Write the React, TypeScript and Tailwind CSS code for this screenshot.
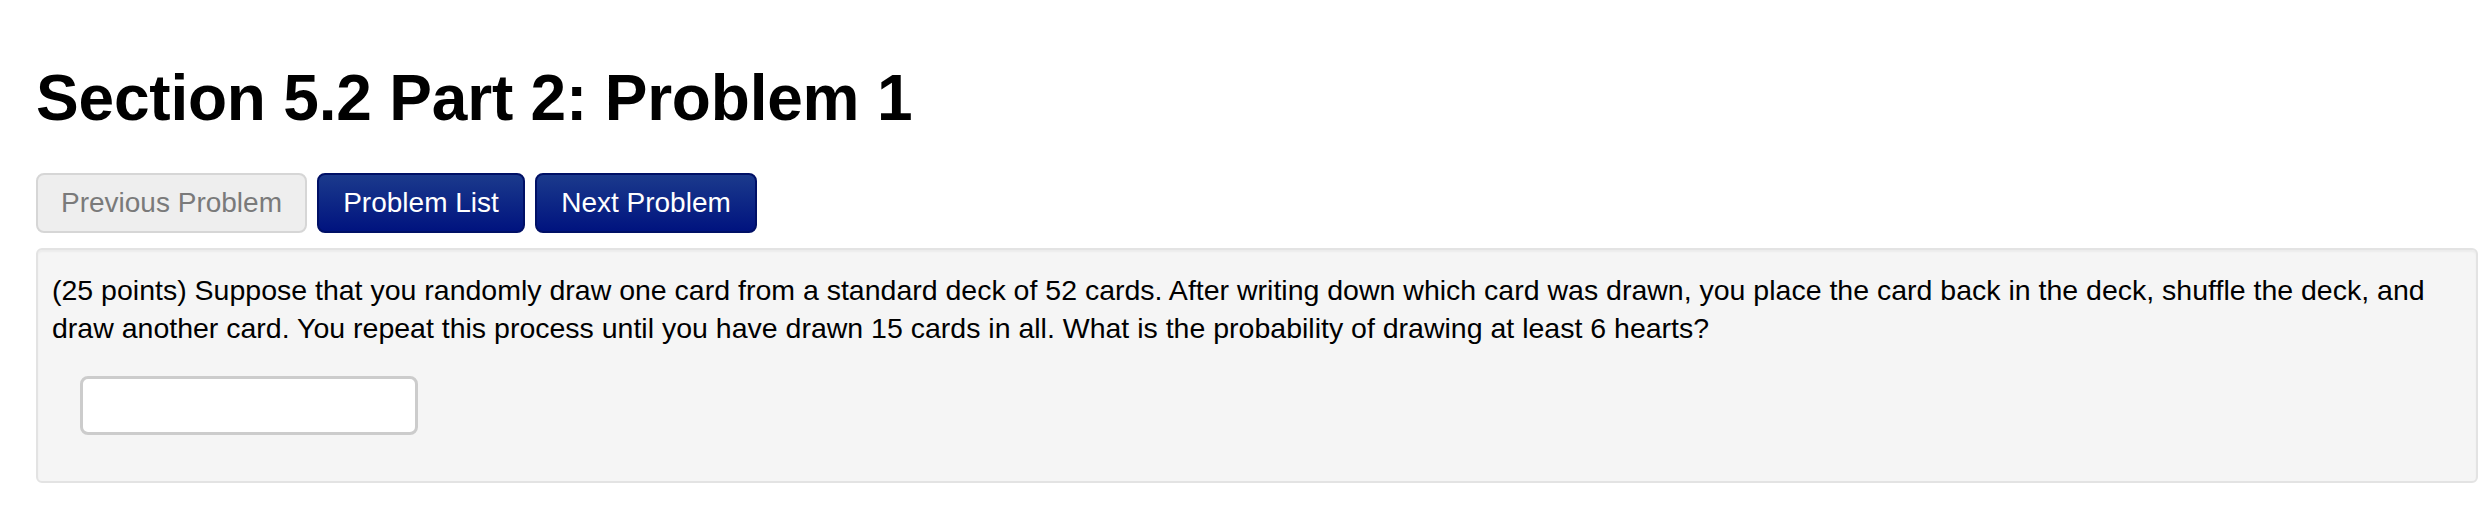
import React from "react";

export default function App() {
  const text =
    "(25 points) Suppose that you randomly draw one card from a standard deck of 52 cards. After writing down which card was drawn, you place the card back in the deck, shuffle the deck, and draw another card. You repeat this process until you have drawn 15 cards in all. What is the probability of drawing at least 6 hearts?";
  return (
    <div className="w-[2490px] h-[508px] bg-white font-['Liberation_Sans',Arial,sans-serif] text-black">
      <div className="pl-[36px] pr-[12px] pt-[58px]">
        <h1 className="text-[64px] font-bold leading-[80px] tracking-[-0.2px] m-0">
          Section 5.2 Part 2: Problem 1
        </h1>
        <div className="flex gap-[10px] mt-[35px]">
          <button className="h-[60px] w-[271px] rounded-[8px] border-2 border-[#d6d6d6] bg-[#eeeeee] text-[28px] text-[#7a7a7a]">
            Previous Problem
          </button>
          <button className="h-[60px] w-[208px] rounded-[8px] border-2 border-[#001066] bg-[linear-gradient(to_bottom,#1b3a8c,#00137f)] text-[28px] text-white">
            Problem List
          </button>
          <button className="h-[60px] w-[222px] rounded-[8px] border-2 border-[#001066] bg-[linear-gradient(to_bottom,#1b3a8c,#00137f)] text-[28px] text-white">
            Next Problem
          </button>
        </div>
        <div className="mt-[15px] w-[2442px] h-[235px] rounded-[6px] border-2 border-[#e3e3e3] bg-[#f5f5f5] shadow-[inset_0_2px_2px_rgba(0,0,0,0.04)] pl-[14px] pr-[16px] pt-[21px]">
          <p className="text-[28.5px] leading-[38px] m-0">{text}</p>
          <div className="mt-[29px] ml-[28px] w-[338px] h-[59px] rounded-[8px] border-[3px] border-[#cccccc] bg-white"></div>
        </div>
      </div>
    </div>
  );
}
